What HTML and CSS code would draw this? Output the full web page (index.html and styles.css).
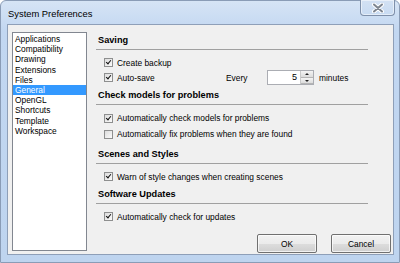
FILE: index.html
```html
<!DOCTYPE html>
<html lang="en">
<head>
    <meta charset="UTF-8">
    <title>System Preferences</title>
    <link rel="stylesheet" href="styles.css">
</head>
<body>
    <div class="window">
        <div class="titlebar">
            <span class="title">System Preferences</span>
            <span class="close">
                <svg width="12" height="10" viewBox="0 0 12 10">
                    <path d="M2 1.5 L10 8.5 M10 1.5 L2 8.5" stroke="#fff" stroke-width="4" stroke-linecap="round"/>
                    <path d="M2 1.5 L10 8.5 M10 1.5 L2 8.5" stroke="#7d8590" stroke-width="2" stroke-linecap="round"/>
                </svg>
            </span>
        </div>
        <div class="client">
            <ul class="categories">
                <li>Applications</li>
                <li>Compatibility</li>
                <li>Drawing</li>
                <li>Extensions</li>
                <li>Files</li>
                <li class="selected">General</li>
                <li>OpenGL</li>
                <li>Shortcuts</li>
                <li>Template</li>
                <li>Workspace</li>
            </ul>
            <div class="panel">
                <div class="group">
                    <h2>Saving</h2>
                    <div class="rows">
                        <label class="check"><span class="box checked"></span>Create backup</label>
                        <div class="autosave">
                            <label class="check"><span class="box checked"></span>Auto-save</label>
                            <span class="every">Every</span>
                            <span class="spin">
                                <span class="value">5</span>
                                <span class="arrows">
                                    <span class="arrow up"></span>
                                    <span class="arrow down"></span>
                                </span>
                            </span>
                            <span class="unit">minutes</span>
                        </div>
                    </div>
                </div>
                <div class="group">
                    <h2>Check models for problems</h2>
                    <div class="rows tall">
                        <label class="check"><span class="box checked"></span>Automatically check models for problems</label>
                        <label class="check"><span class="box"></span>Automatically fix problems when they are found</label>
                    </div>
                </div>
                <div class="group">
                    <h2>Scenes and Styles</h2>
                    <div class="rows">
                        <label class="check"><span class="box checked"></span>Warn of style changes when creating scenes</label>
                    </div>
                </div>
                <div class="group">
                    <h2>Software Updates</h2>
                    <div class="rows">
                        <label class="check"><span class="box checked"></span>Automatically check for updates</label>
                    </div>
                </div>
                <div class="buttons">
                    <button>OK</button>
                    <button>Cancel</button>
                </div>
            </div>
        </div>
    </div>
</body>
</html>
```

FILE: styles.css
```css
body {
    margin: 0;
    font-family: "Liberation Sans", Arial, sans-serif;
    font-size: 8.4px;
    color: #000;
}
.window {
    width: 400px;
    height: 263px;
    box-sizing: border-box;
    border: 1px solid #8a9cb6;
    border-radius: 6px 6px 0 0;
    background: linear-gradient(to bottom, #d6e4f5, #c2d7f1 30px, #bed4ef);
    display: flex;
    flex-direction: column;
}
.titlebar {
    height: 23px;
    display: flex;
    align-items: flex-start;
    justify-content: space-between;
}
.title {
    font-size: 9.4px;
    padding: 7px 0 0 7px;
}
.close {
    width: 35px;
    height: 16px;
    margin: -1px 4px 0 0;
    box-sizing: border-box;
    border: 1px solid #7f90aa;
    border-top: none;
    border-radius: 0 0 4px 4px;
    background: linear-gradient(to bottom, #d3e1f3, #c8dbf2);
    box-shadow: inset 0 0 0 1px rgba(255, 255, 255, 0.5);
    display: flex;
    align-items: center;
    justify-content: center;
}
.client {
    flex: 1;
    margin: 0 5px 7px 6px;
    border: 1px solid #8e9fb8;
    background: #f0f0f0;
    display: flex;
    padding: 7px 0 0 4px;
}
.categories {
    list-style: none;
    margin: 0;
    padding: 1px 0 0;
    width: 75px;
    height: 219px;
    box-sizing: border-box;
    border: 1px solid #828790;
    background: #fff;
}
.categories li {
    line-height: 10.2px;
    padding-left: 2px;
}
.categories li.selected {
    background: #3399ff;
    color: #fff;
}
.panel {
    flex: 1;
    display: flex;
    flex-direction: column;
    padding: 2px 2px 1px 9px;
}
.group {
    margin-right: 23px;
}
.group h2 {
    margin: 0;
    font-size: 9.2px;
    line-height: 12px;
    padding: 0 0 3px 2px;
    border-bottom: 1px solid #a0a0a0;
}
.rows {
    padding: 5px 0 4px 8px;
}
.rows.tall {
    padding-bottom: 6px;
}
.tall .check {
    height: 16px;
}
.check {
    display: flex;
    align-items: center;
    height: 15px;
    gap: 4px;
}
.box {
    width: 9px;
    height: 9px;
    box-sizing: border-box;
    border: 1px solid #8e8f8f;
    background: linear-gradient(135deg, #dcdcdc, #fbfbfb);
    position: relative;
}
.box.checked::after {
    content: "";
    position: absolute;
    left: 2px;
    top: 0;
    width: 2px;
    height: 4px;
    border: solid #111;
    border-width: 0 1.5px 1.5px 0;
    transform: rotate(40deg);
}
.autosave {
    display: flex;
    align-items: center;
    height: 15px;
}
.autosave .check {
    width: 122px;
}
.every {
    width: 41px;
}
.spin {
    width: 47px;
    height: 15px;
    box-sizing: border-box;
    border: 1px solid #abadb3;
    background: #fff;
    display: flex;
}
.value {
    flex: 1;
    text-align: right;
    font-size: 9px;
    line-height: 13px;
    padding-right: 3px;
}
.arrows {
    width: 12px;
    display: flex;
    flex-direction: column;
    border-left: 1px solid #c9c9c9;
}
.arrow {
    flex: 1;
    background: linear-gradient(to bottom, #f4f4f4, #dcdcdc);
    border-bottom: 1px solid #b5b5b5;
    position: relative;
}
.arrow::after {
    content: "";
    position: absolute;
    left: 4px;
    top: 2px;
    border-left: 2px solid transparent;
    border-right: 2px solid transparent;
}
.arrow.up::after {
    border-bottom: 2px solid #222;
}
.arrow.down::after {
    border-top: 2px solid #222;
}
.unit {
    margin-left: 5px;
}
.buttons {
    margin-top: auto;
    display: flex;
    justify-content: flex-end;
    gap: 14px;
}
.buttons button {
    width: 60px;
    height: 19px;
    font-family: inherit;
    font-size: 8.4px;
    border: 1px solid #707070;
    border-radius: 2px;
    background: linear-gradient(to bottom, #f2f2f2, #ebebeb 50%, #dddddd 51%, #cfcfcf);
    box-shadow: inset 0 0 0 1px rgba(255, 255, 255, 0.7);
    padding: 0;
}
```
